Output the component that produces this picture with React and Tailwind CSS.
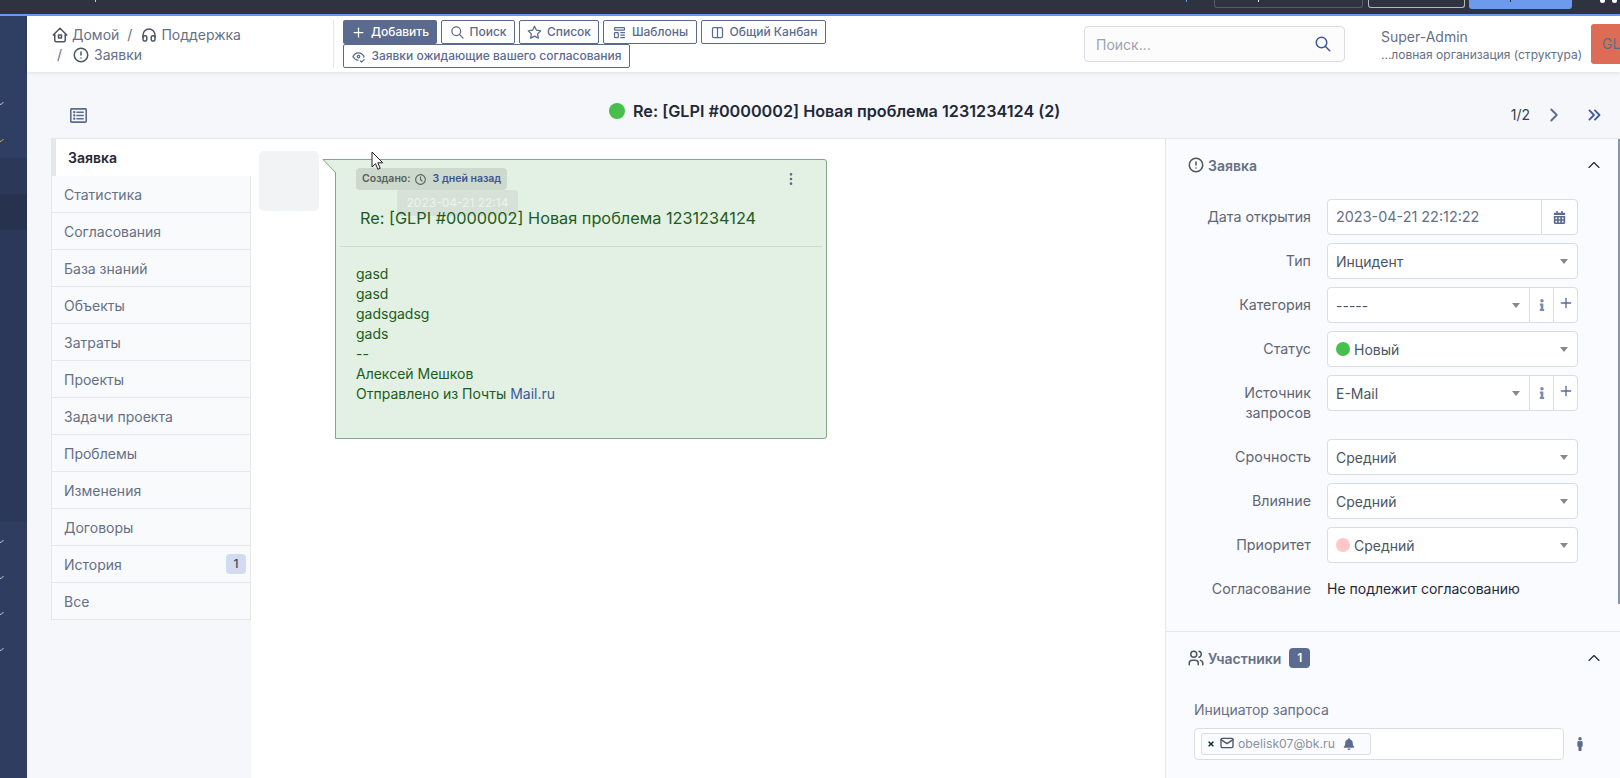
import React from 'react'
import {
  TbHome2,
  TbHeadphones,
  TbAlertCircle,
  TbPlus,
  TbSearch,
  TbStar,
  TbTemplate,
  TbLayoutColumns,
  TbEyeCheck,
  TbChevronRight,
  TbChevronsRight,
  TbChevronUp,
  TbUsers,
  TbMail,
  TbClock,
  TbDotsVertical,
} from 'react-icons/tb'
import { FaCalendarAlt, FaBell, FaMale, FaInfo, FaTimes, FaRegListAlt } from 'react-icons/fa'

const tabs = [
  'Статистика',
  'Согласования',
  'База знаний',
  'Объекты',
  'Затраты',
  'Проекты',
  'Задачи проекта',
  'Проблемы',
  'Изменения',
  'Договоры',
  'История',
  'Все',
]

const messageLines = ['gasd', 'gasd', 'gadsgadsg', 'gads', '--', 'Алексей Мешков']

const Caret = () => (
  <svg width="8" height="5" viewBox="0 0 8 5" className="shrink-0">
    <path d="M0 0h8L4 5z" fill="#888" />
  </svg>
)

const Dot = ({ color }) => <span className={`w-[14px] h-[14px] rounded-full mr-[4px] ${color}`}></span>

const Control = ({ children, addons }) => (
  <div className="w-[251px] h-9 flex border border-[#dadde5] rounded-[4px] bg-white text-[14px] text-[#4b5563]">
    <div className="flex-1 flex items-center justify-between pl-2 pr-[9px]">{children}</div>
    {addons && (
      <>
        <div className="w-6 border-l border-[#dadde5] flex items-center justify-center text-[#7d8aa8]">
          <FaInfo size={12} />
        </div>
        <div className="w-6 border-l border-[#dadde5] flex items-center justify-center text-[#5b6b8f]">
          <TbPlus size={16} className="-mt-1" />
        </div>
      </>
    )}
  </div>
)

const Field = ({ label, children }) => (
  <div className="flex gap-4 mb-2">
    <div className="w-[123px] py-2 text-right text-[14.25px] leading-5 text-[#5f6675]">{label}</div>
    {children}
  </div>
)

const ActionButton = ({ icon: Icon, width, children }) => (
  <button className={`h-6 flex items-center justify-center gap-[5px] border border-[#5b6b8f] rounded-[2px] text-[12px] font-medium text-[#5b6b8f] bg-white ${width}`}>
    <Icon size={15} />
    {children}
  </button>
)

const SideCheck = ({ color }) => (
  <svg width="4" height="4" viewBox="0 0 4 4" className="block">
    <path d="M0 3l1 .6L3.5 1" fill="none" stroke={color} strokeWidth="1" />
  </svg>
)

const App = () => {
  return (
    <div className="h-screen w-full overflow-hidden flex flex-col bg-[#f5f7fb] font-['Inter',sans-serif]">
      {/* Top bar, cut off by the window */}
      <div className="h-[14px] shrink-0 bg-[#2d343f] flex items-start overflow-hidden">
        <span className="w-px h-[2px] ml-[95px] bg-[#c9ced8]"></span>
        <span className="w-px h-[2px] ml-[1090px] bg-[#6c9bee]"></span>
        <div className="w-[149px] h-2 ml-[27px] pl-[43px] border border-t-0 border-[#565c68] rounded-b-[3px]">
          <span className="block w-px h-[2px] bg-white"></span>
        </div>
        <div className="w-[97px] h-2 ml-[5px] border border-t-0 border-[#b5b8bf] rounded-b-[3px]"></div>
        <div className="w-[103px] h-[9px] ml-[4px] pl-[41px] bg-[#6c9bee] rounded-b-[3px]">
          <span className="block w-px h-[2px] bg-[#2d343f]"></span>
        </div>
        <div className="flex gap-[7px] ml-[28px]">
          <span className="w-[5px] h-[3px] bg-white rounded-b-full"></span>
          <span className="w-[5px] h-[3px] bg-white rounded-b-full"></span>
        </div>
      </div>
      <div className="h-[2px] shrink-0 bg-[#6c9bee]"></div>

      <div className="flex-1 flex min-h-0">
        {/* Sidebar */}
        <div className="w-[27px] shrink-0 flex flex-col">
          <div className="h-[142px] bg-[#2f3e63] pt-[85px] flex flex-col gap-[33px]">
            <SideCheck color="#c9ced8" />
            <SideCheck color="#e0b060" />
          </div>
          <div className="h-9 bg-[#2b3858]"></div>
          <div className="h-9 bg-[#27324f]"></div>
          <div className="h-[292px] bg-[#2b3859]"></div>
          <div className="flex-1 bg-[#2f3d60] pt-[17px] flex flex-col gap-[32px]">
            <SideCheck color="#c9ced8" />
            <SideCheck color="#c9ced8" />
            <SideCheck color="#c9ced8" />
            <SideCheck color="#c9ced8" />
          </div>
        </div>

        <div className="flex-1 min-w-0 flex flex-col">
          {/* Header */}
          <div className="h-14 shrink-0 bg-white shadow-[0_1px_4px_rgba(0,0,0,0.1)] flex items-center z-10">
            <div className="w-[307px] h-12 pl-[24px] pt-px border-r border-[#e5e7eb] text-[14px] leading-5 text-[#667085] flex flex-col justify-center">
              <div className="flex items-center">
                <TbHome2 size={18} className="mr-[3px] text-[#4b5563]" />
                Домой
                <span className="mx-[8px]">/</span>
                <TbHeadphones size={18} className="mr-[3px] text-[#4b5563]" />
                Поддержка
              </div>
              <div className="flex items-center">
                <span className="ml-[6px] mr-[10px]">/</span>
                <TbAlertCircle size={18} className="mr-[4px] text-[#4b5563]" />
                Заявки
              </div>
            </div>
            <div className="w-[487px] ml-[9px] flex flex-wrap gap-x-1 content-start">
              <button className="h-6 w-[94px] flex items-center justify-center gap-[5px] rounded-[2px] bg-[#5b6b8f] text-[12px] font-medium text-white">
                <TbPlus size={15} />
                Добавить
              </button>
              <ActionButton icon={TbSearch} width="w-[74px]">Поиск</ActionButton>
              <ActionButton icon={TbStar} width="w-[80px]">Список</ActionButton>
              <ActionButton icon={TbTemplate} width="w-[94px]">Шаблоны</ActionButton>
              <ActionButton icon={TbLayoutColumns} width="w-[125px]">Общий Канбан</ActionButton>
              <ActionButton icon={TbEyeCheck} width="w-[287px]">Заявки ожидающие вашего согласования</ActionButton>
            </div>
            <div className="w-[261px] h-9 ml-[254px] pl-[11px] pr-3 flex items-center justify-between border border-[#dadde5] rounded-[4px] bg-[#fcfcfd] text-[14px] text-[#9ca3af]">
              Поиск...
              <TbSearch size={18} className="text-[#3b5998]" />
            </div>
            <div className="ml-[36px] w-[210px] text-[#667085]">
              <div className="text-[14px] leading-5">Super-Admin</div>
              <div className="text-[12px] leading-[15px] whitespace-nowrap">...ловная организация (структура)</div>
            </div>
            <div className="w-[29px] h-10 shrink-0 overflow-hidden rounded-l-[3px] bg-[#dd6b55] pl-[11px] text-[14px] leading-10 text-[#5b6b8f]">
              GL
            </div>
          </div>

          {/* Title row */}
          <div className="h-[66px] shrink-0 flex items-center pl-[43px] pr-[15px] relative">
            <FaRegListAlt size={17} className="text-[#5b6b8f] mt-[20px]" />
            <div className="absolute left-[582px] top-[27px] flex items-center gap-2 text-[16.2px] font-semibold text-[#1f2937]">
              <span className="w-4 h-4 rounded-full bg-[#47bf4d]"></span>
              Re: [GLPI #0000002] Новая проблема 1231234124 (2)
            </div>
            <div className="ml-auto flex items-center mt-[19px] text-[14px] text-[#374151]">
              1/2
              <TbChevronRight size={22} className="ml-[13px] text-[#5b6b8f]" />
              <TbChevronsRight size={22} className="ml-[18px] text-[#3f5a96]" />
            </div>
          </div>

          <div className="flex-1 min-h-0 flex pl-[24px]">
            {/* Tabs */}
            <div className="w-[200px] shrink-0 text-[14px] text-[#667085]">
              <div className="h-[38px] pl-[12px] flex items-center border-l-[5px] border-t border-[#e5e7eb] bg-white font-semibold text-[#1f2937]">
                Заявка
              </div>
              {tabs.map((tab) => (
                <div
                  key={tab}
                  className="h-[37px] pl-3 pr-1 flex items-center justify-between border border-t-0 border-[#e5e7eb] bg-[#f9fafc]"
                >
                  {tab}
                  {tab === 'История' && (
                    <span className="w-5 h-5 flex items-center justify-center rounded-[4px] bg-[#d2dbf0] text-[12px] font-medium text-[#374766]">
                      1
                    </span>
                  )}
                </div>
              ))}
            </div>

            {/* Timeline */}
            <div className="flex-1 min-w-0 bg-white border-t border-[#e5e7eb] pl-2 pt-3 flex items-start gap-4 relative">
              <div className="w-[60px] h-[60px] shrink-0 rounded-[5px] bg-[#f1f3f5]"></div>
              <div className="w-[492px] h-[280px] mt-2 relative border border-[#83a884] rounded-r-[3px] bg-[#e2f1e4] text-[#1e5b20]">
                <svg width="14" height="14" viewBox="0 0 14 14" className="absolute -left-[14px] -top-px">
                  <path d="M0 .5h14V14z" fill="#e2f1e4" />
                  <path d="M14 .5H1L14 14" fill="none" stroke="#83a884" />
                </svg>
                <div className="ml-[20px] mt-2 w-[151px] h-[22px] flex items-center pl-[6px] rounded-[4px] bg-[#ced9cd] text-[10.5px] font-semibold text-[#555f5c] whitespace-nowrap">
                  Создано:
                  <TbClock size={13} className="ml-[3px] mr-[6px]" />
                  <span className="text-[#3b5590]">3 дней назад</span>
                </div>
                <div className="absolute left-[61px] top-[30px] w-[121px] h-[26px] flex items-center justify-center rounded-[4px] bg-[#d3dfd3]/80 text-[12px] text-[#edf3ed] whitespace-nowrap">
                  2023-04-21 22:14
                </div>
                <TbDotsVertical size={16} className="absolute right-[27px] top-[11px] text-[#5b6b8f]" />
                <div className="pl-[24px] pt-[16px] h-[57px] text-[16.3px] leading-6 relative">
                  Re: [GLPI #0000002] Новая проблема 1231234124
                </div>
                <div className="mx-1 mt-[-1px] border-t border-[#c8dcc9]"></div>
                <div className="pl-[20px] pt-[17px] text-[14px] leading-5">
                  {messageLines.map((line, i) => (
                    <div key={i}>{line}</div>
                  ))}
                  <div>
                    Отправлено из Почты <span className="text-[#3b5998]">Mail.ru</span>
                  </div>
                </div>
              </div>
              <svg width="14" height="20" viewBox="0 0 14 20" className="absolute left-[120px] top-[12px]">
                <path d="M1 1v15l3.5-3.3 2.4 5.6 2.3-1-2.4-5.5h5z" fill="#fff" stroke="#222" strokeWidth="1" />
              </svg>
            </div>

            {/* Right panel */}
            <div className="w-[455px] shrink-0 relative overflow-hidden border-l border-t border-[#e5e7eb] bg-[#fafbfe]">
              <div className="absolute right-0 top-0 w-[2px] h-[465px] bg-[#8994ae]"></div>
              <div className="h-[52px] pl-[21px] pr-[16px] flex items-center text-[14px] font-semibold text-[#667085]">
                <TbAlertCircle size={18} className="mr-[3px] text-[#4b5563]" />
                Заявка
                <TbChevronUp size={20} strokeWidth={1.4} className="ml-auto text-[#1f2937]" />
              </div>
              <div className="pt-2 pl-[22px] pb-[16px] border-b border-[#e5e7eb]">
                <Field label="Дата открытия">
                  <div className="w-[251px] h-9 flex border border-[#dadde5] rounded-[4px] bg-white text-[14.4px] text-[#667085]">
                    <div className="flex-1 flex items-center pl-2">2023-04-21 22:12:22</div>
                    <div className="w-9 border-l border-[#dadde5] flex items-center justify-center text-[#5b6b8f]">
                      <FaCalendarAlt size={13} />
                    </div>
                  </div>
                </Field>
                <Field label="Тип">
                  <Control>
                    Инцидент
                    <Caret />
                  </Control>
                </Field>
                <Field label="Категория">
                  <Control addons>
                    -----
                    <Caret />
                  </Control>
                </Field>
                <Field label="Статус">
                  <Control>
                    <span className="flex items-center">
                      <Dot color="bg-[#47bf4d]" />
                      Новый
                    </span>
                    <Caret />
                  </Control>
                </Field>
                <Field label={<>Источник<br />запросов</>}>
                  <Control addons>
                    E-Mail
                    <Caret />
                  </Control>
                </Field>
                <Field label="Срочность">
                  <Control>
                    Средний
                    <Caret />
                  </Control>
                </Field>
                <Field label="Влияние">
                  <Control>
                    Средний
                    <Caret />
                  </Control>
                </Field>
                <Field label="Приоритет">
                  <Control>
                    <span className="flex items-center">
                      <Dot color="bg-[#ffc7c7]" />
                      Средний
                    </span>
                    <Caret />
                  </Control>
                </Field>
                <Field label="Согласование">
                  <div className="py-2 text-[14px] leading-5 text-[#1f2937]">Не подлежит согласованию</div>
                </Field>
              </div>
              <div className="h-[52px] pl-[21px] pr-[16px] flex items-center text-[14px] font-semibold text-[#667085]">
                <TbUsers size={18} className="mr-[3px] text-[#4b5563]" />
                Участники
                <span className="w-[21px] h-5 ml-2 flex items-center justify-center rounded-[4px] bg-[#5b6b8f] text-[12px] text-white">
                  1
                </span>
                <TbChevronUp size={20} strokeWidth={1.4} className="ml-auto text-[#1f2937]" />
              </div>
              <div className="pl-[28px] pt-[16px] text-[14px] leading-5 text-[#667085]">Инициатор запроса</div>
              <div className="pl-[28px] mt-2 flex items-center">
                <div className="w-[370px] h-[32px] pl-[6px] flex items-center border border-[#dadde5] rounded-[4px] bg-white">
                  <div className="w-[170px] h-[22px] flex items-center pl-[5px] border border-[#dadde5] rounded-[2px] bg-[#fafbfe] text-[12.25px] text-[#8a92a0]">
                    <FaTimes size={8} className="text-[#1f2937] mr-[4px]" />
                    <TbMail size={16} className="mr-[3px] -mt-[3px] text-[#4b5563]" />
                    obelisk07@bk.ru
                    <FaBell size={12} className="ml-[8px] text-[#5b6b8f]" />
                  </div>
                </div>
                <FaMale size={14} className="ml-[9px] text-[#5b6b8f]" />
              </div>
            </div>
          </div>
        </div>
      </div>
    </div>
  )
}

export default App
